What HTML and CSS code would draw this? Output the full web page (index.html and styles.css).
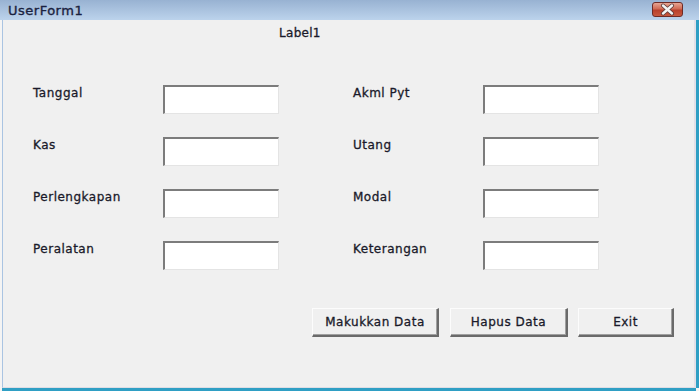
FILE: index.html
```html
<html>
<head>
<link rel="stylesheet" href="styles.css">
</head>
<body>
<div class="window">
  <div class="titlebar">
    <span class="title">UserForm1</span>
    <span class="close">
      <svg width="31" height="15" viewBox="0 0 31 15">
        <path d="M11 3.5 L20 11.5 M20 3.5 L11 11.5" stroke="#5a3a3a" stroke-width="4" stroke-linecap="round"/>
        <path d="M11 3.5 L20 11.5 M20 3.5 L11 11.5" stroke="#f4f4f4" stroke-width="2.4" stroke-linecap="round"/>
      </svg>
    </span>
  </div>
  <div class="client">
    <div class="caption">Label1</div>
    <div class="fields">
      <span class="lbl">Tanggal</span><span class="box"></span>
      <span class="lbl">Akml Pyt</span><span class="box"></span>
      <span class="lbl">Kas</span><span class="box"></span>
      <span class="lbl">Utang</span><span class="box"></span>
      <span class="lbl">Perlengkapan</span><span class="box"></span>
      <span class="lbl">Modal</span><span class="box"></span>
      <span class="lbl">Peralatan</span><span class="box"></span>
      <span class="lbl">Keterangan</span><span class="box"></span>
    </div>
    <div class="buttons">
      <span class="btn btn-save">Makukkan Data</span>
      <span class="btn btn-del">Hapus Data</span>
      <span class="btn btn-exit">Exit</span>
    </div>
  </div>
</div>
</body>
</html>
```
FILE: styles.css
```css
html, body { margin:0; padding:0; background:#f4f4f4; }
body
{
  font-family:"DejaVu Sans", sans-serif;
  font-size:12px;
  letter-spacing:0.5px;
  color:#1a1a2a;
  -webkit-text-stroke:0.3px #1a1a2a;
}

.window
{
  width:699px;
  height:391px;
  display:flex;
  flex-direction:column;
  box-sizing:border-box;
}

.titlebar
{
  height:20px;
  display:flex;
  align-items:center;
  justify-content:space-between;
  background:linear-gradient(#98b2d2, #bcd3ec);
  padding:0 16px 0 8px;
  box-sizing:border-box;
}
.title { font-size:13px; color:#1a2240; -webkit-text-stroke:0.35px #1a2240; letter-spacing:0.5px; }
.close
{
  width:31px;
  height:15px;
  margin-top:-2px;
  border:1px solid #6e2b26;
  border-radius:3px;
  background:linear-gradient(#e7a593 0%, #d06a54 45%, #b8402c 55%, #c8583e 100%);
  box-sizing:border-box;
  display:flex;
  align-items:center;
  justify-content:center;
  overflow:hidden;
}
.close svg { display:block; margin:-1px; }

.client
{
  flex:1;
  background:#f0f0f0;
  border-left:1px solid #aac4e2;
  margin-left:2px;
  border-right:2px solid #e2e0e8;
  border-bottom:1px solid #dedde4;
  box-shadow:3px 0 0 #2f9fc4, 0 3px 0 #2f9fc4;
  margin-right:3px;
  margin-bottom:3px;
  display:flex;
  flex-direction:column;
}

.caption { margin:6px 0 0 276px; line-height:14px; letter-spacing:0.3px; }

.fields
{
  display:grid;
  grid-template-columns:130px 116px 74px 130px 116px;
  grid-template-rows:repeat(4, 29px);
  row-gap:23px;
  margin:45px 0 0 30px;
}
.fields .lbl { align-self:start; margin-top:1px; line-height:14px; }
.fields .lbl:nth-child(4n+3) { grid-column:4; }
.fields .box:nth-child(4n+4) { grid-column:5; }

.box
{
  background:#fff;
  border-top:2px solid #7c7c7c;
  border-left:2px solid #7c7c7c;
  border-right:1px solid #e4e4e4;
  border-bottom:1px solid #e4e4e4;
  box-sizing:border-box;
}

.buttons
{
  display:flex;
  margin:38px 0 0 309px;
  gap:11px;
}
.btn
{
  height:29px;
  display:flex;
  align-items:center;
  justify-content:center;
  background:#f0f0f0;
  border-top:1px solid #fcfcfc;
  border-left:1px solid #fcfcfc;
  border-right:2px solid #6a6a6a;
  border-bottom:2px solid #6a6a6a;
  box-shadow:inset -1px -1px 0 #a0a0a0;
  box-sizing:border-box;
}
.btn-save { width:127px; }
.btn-del { width:118px; margin-right:-1px; }
.btn-exit { width:96px; }
```
